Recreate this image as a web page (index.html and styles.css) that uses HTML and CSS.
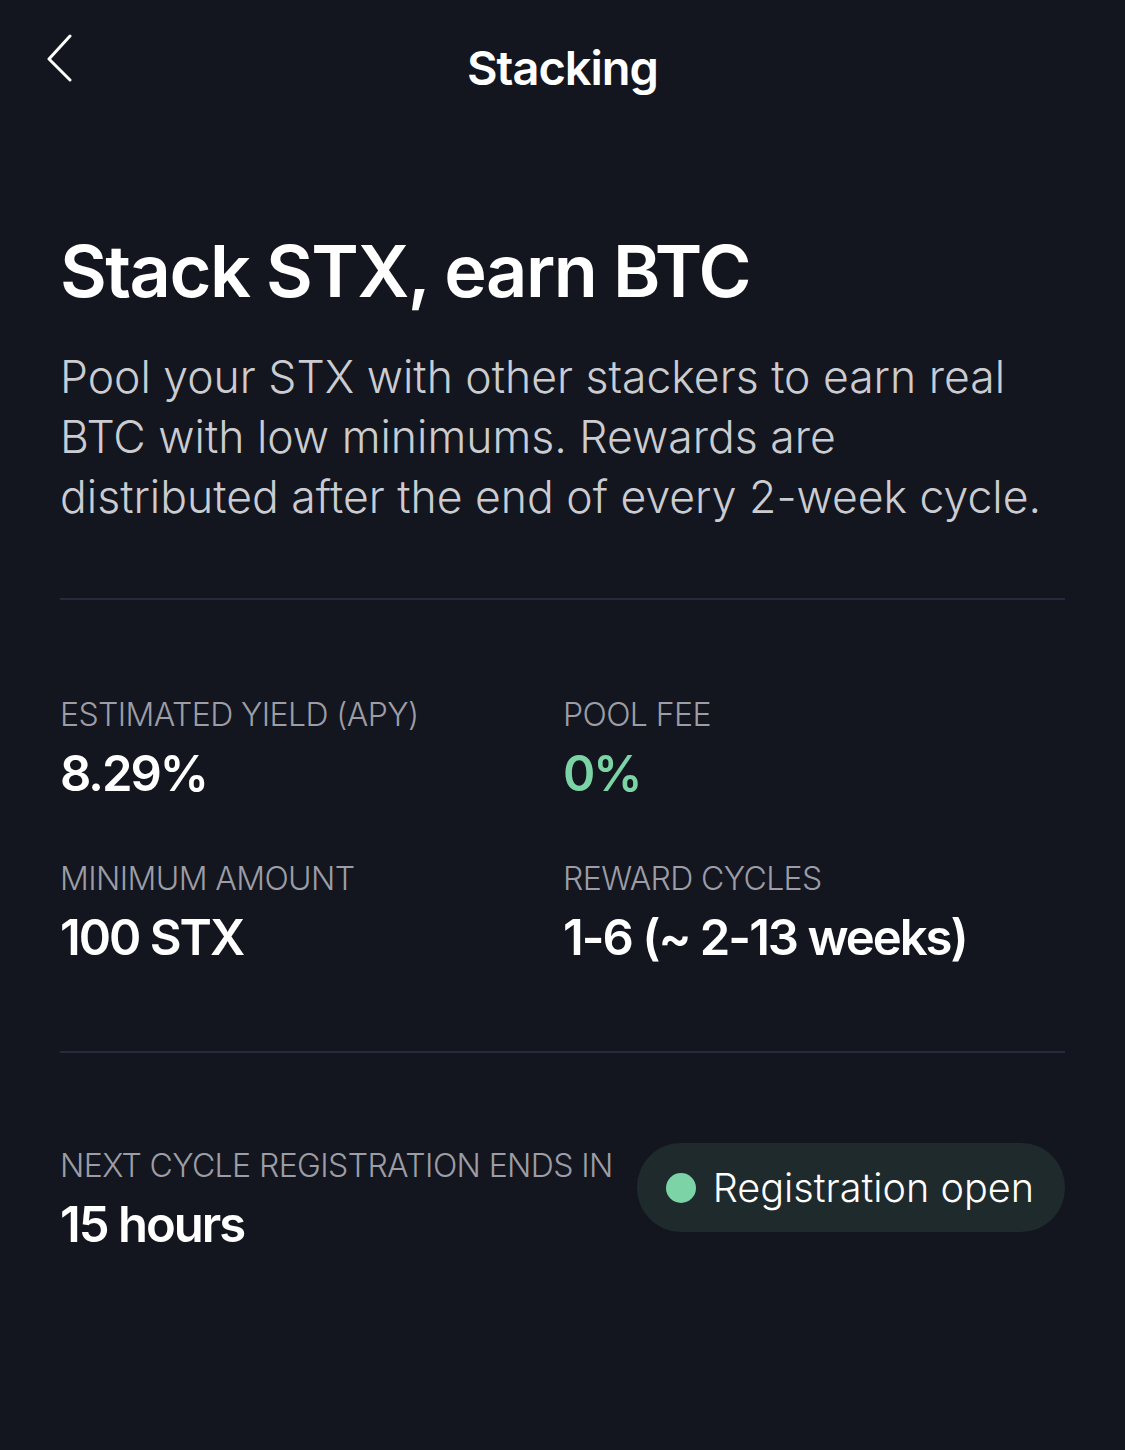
FILE: index.html
```html
<!DOCTYPE html>
<html lang="en">
<head>
    <meta charset="UTF-8">
    <meta name="viewport" content="width=device-width, initial-scale=1.0">
    <title>Stacking</title>
    <link rel="stylesheet" href="styles.css">
</head>
<body>
    <header class="topbar">
        <button class="back-btn" aria-label="Back">
            <svg width="30" height="50" viewBox="0 0 30 50">
                <path d="M26 4 L5 27 L26 48" fill="none" stroke="#ffffff" stroke-width="3" stroke-linecap="round" stroke-linejoin="round"/>
            </svg>
        </button>
        <h1 class="title">Stacking</h1>
    </header>
    <main class="content">
        <section class="intro">
            <h2>Stack STX, earn BTC</h2>
            <p>Pool your STX with other stackers to earn real BTC with low minimums. Rewards are distributed after the end of every 2-week cycle.</p>
        </section>
        <hr class="divider">
        <section class="stats">
            <div class="stat">
                <div class="label">ESTIMATED YIELD (APY)</div>
                <div class="value">8.29%</div>
            </div>
            <div class="stat">
                <div class="label">POOL FEE</div>
                <div class="value green">0%</div>
            </div>
            <div class="stat">
                <div class="label">MINIMUM AMOUNT</div>
                <div class="value">100 STX</div>
            </div>
            <div class="stat">
                <div class="label">REWARD CYCLES</div>
                <div class="value">1-6 (~ 2-13 weeks)</div>
            </div>
        </section>
        <hr class="divider">
        <section class="registration">
            <div class="stat">
                <div class="label">NEXT CYCLE REGISTRATION ENDS IN</div>
                <div class="value">15 hours</div>
            </div>
            <div class="status-pill">
                <span class="dot"></span>
                <span>Registration open</span>
            </div>
        </section>
    </main>
</body>
</html>
```

FILE: styles.css
```css
body {
    margin: 0;
    background: #13161e;
    color: #ffffff;
    font-family: Inter, "Noto Sans", sans-serif;
    width: 1125px;
    height: 1450px;
}
.topbar {
    position: relative;
    height: 140px;
    display: flex;
    justify-content: center;
}
.back-btn {
    position: absolute;
    left: 44px;
    top: 32px;
    background: none;
    border: none;
    padding: 0;
    cursor: pointer;
}
.title {
    margin: 0;
    padding-top: 39px;
    font-size: 47px;
    font-weight: 600;
    letter-spacing: -1px;
}
.content {
    padding: 0 60px;
}
.intro {
    padding-top: 86px;
}
.intro h2 {
    margin: 0;
    font-size: 72px;
    font-weight: 600;
    letter-spacing: -1.5px;
    line-height: 90px;
}
.intro p {
    margin: 31px 0 0;
    font-size: 44.5px;
    font-weight: 300;
    line-height: 60px;
    color: #cbccd1;
}
.divider {
    border: none;
    height: 2px;
    background: #272a3d;
    margin: 0;
}
.intro + .divider {
    margin-top: 71px;
}
.stats {
    display: grid;
    grid-template-columns: 503px 1fr;
    row-gap: 51px;
    padding: 93px 0 81px;
}
.label {
    font-size: 32px;
    font-weight: 300;
    letter-spacing: -0.6px;
    color: #9c9da6;
    line-height: 44px;
    white-space: nowrap;
}
.value {
    font-size: 49px;
    font-weight: 600;
    letter-spacing: -2px;
    line-height: 64px;
    margin-top: 5px;
}
.value.green {
    color: #7bd3a6;
}
.registration {
    display: flex;
    justify-content: space-between;
    align-items: flex-start;
    padding-top: 91px;
}
.status-pill {
    display: flex;
    align-items: center;
    gap: 17px;
    height: 89px;
    padding: 0 31px 0 29px;
    border-radius: 44px;
    background: #1f2a2c;
    font-size: 39.6px;
    font-weight: 300;
    white-space: nowrap;
    margin-top: -1px;
}
.dot {
    width: 30px;
    height: 30px;
    border-radius: 50%;
    background: #7bd3a6;
}
```
